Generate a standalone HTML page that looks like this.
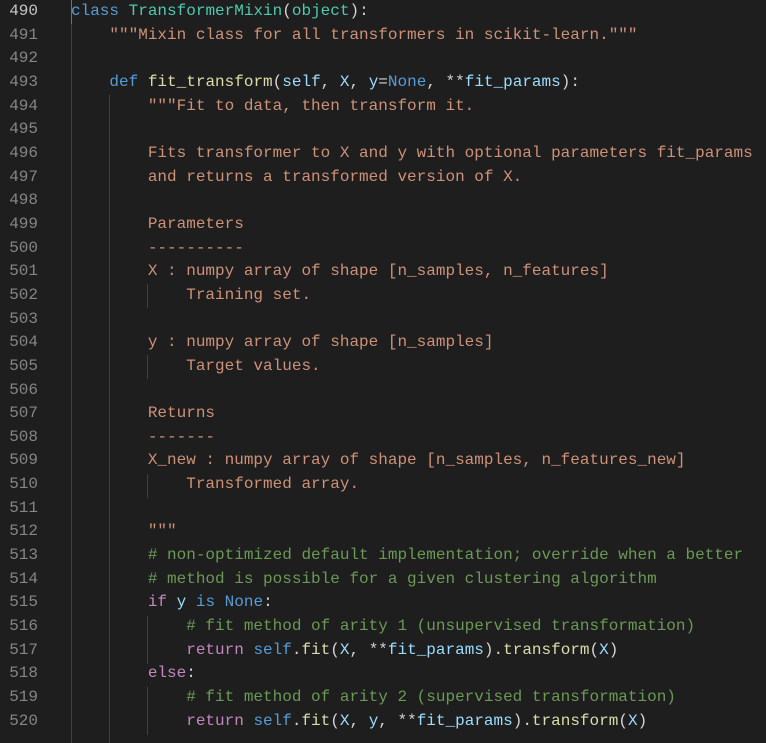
<!DOCTYPE html>
<html><head><meta charset="utf-8"><style>
html,body{margin:0;padding:0;background:#1e1e1e;width:766px;height:743px;overflow:hidden}
.ln{position:absolute;left:0;width:38px;text-align:right;color:#858585;font:16px "Liberation Mono",monospace;}
.code{position:absolute;left:71px;top:0;font:16px "Liberation Mono",monospace;color:#d4d4d4;}
.r{height:23.67px;line-height:23.67px;white-space:pre}
.g{position:absolute;width:1px;background:#404040}
.k{color:#569cd6}.c{color:#4ec9b0}.s{color:#ce9178}.m{color:#6a9955}.f{color:#dcdcaa}.p{color:#9cdcfe}.q{color:#c586c0}
</style></head><body>
<div class="g" style="left:71px;top:0;height:24px;background:#707070"></div>
<div class="g" style="left:71px;top:24px;height:719px"></div>
<div class="g" style="left:109px;top:95px;height:648px"></div>
<div class="g" style="left:147px;top:284px;height:24px"></div>
<div class="g" style="left:147px;top:355px;height:24px"></div>
<div class="g" style="left:147px;top:474px;height:24px"></div>
<div class="g" style="left:147px;top:616px;height:48px"></div>
<div class="g" style="left:147px;top:687px;height:48px"></div>
<div class="code"><div class="r"><span class="k">class</span> <span class="c">TransformerMixin</span>(<span class="c">object</span>):</div><div class="r">    <span class="s">"""Mixin class for all transformers in scikit-learn."""</span></div><div class="r"> </div><div class="r">    <span class="k">def</span> <span class="f">fit_transform</span>(<span class="p">self</span>, <span class="p">X</span>, <span class="p">y</span>=<span class="k">None</span>, **<span class="p">fit_params</span>):</div><div class="r s">        """Fit to data, then transform it.</div><div class="r"> </div><div class="r s">        Fits transformer to X and y with optional parameters fit_params</div><div class="r s">        and returns a transformed version of X.</div><div class="r"> </div><div class="r s">        Parameters</div><div class="r s">        ----------</div><div class="r s">        X : numpy array of shape [n_samples, n_features]</div><div class="r s">            Training set.</div><div class="r"> </div><div class="r s">        y : numpy array of shape [n_samples]</div><div class="r s">            Target values.</div><div class="r"> </div><div class="r s">        Returns</div><div class="r s">        -------</div><div class="r s">        X_new : numpy array of shape [n_samples, n_features_new]</div><div class="r s">            Transformed array.</div><div class="r"> </div><div class="r s">        """</div><div class="r m">        # non-optimized default implementation; override when a better</div><div class="r m">        # method is possible for a given clustering algorithm</div><div class="r">        <span class="q">if</span> <span class="p">y</span> <span class="k">is</span> <span class="k">None</span>:</div><div class="r m">            # fit method of arity 1 (unsupervised transformation)</div><div class="r">            <span class="q">return</span> <span class="k">self</span>.<span class="f">fit</span>(<span class="p">X</span>, **<span class="p">fit_params</span>).<span class="f">transform</span>(<span class="p">X</span>)</div><div class="r">        <span class="q">else</span>:</div><div class="r m">            # fit method of arity 2 (supervised transformation)</div><div class="r">            <span class="q">return</span> <span class="k">self</span>.<span class="f">fit</span>(<span class="p">X</span>, <span class="p">y</span>, **<span class="p">fit_params</span>).<span class="f">transform</span>(<span class="p">X</span>)</div></div>
<div class="ln" style="top:0"><div class="r" style="color:#c6c6c6">490</div><div class="r">491</div><div class="r">492</div><div class="r">493</div><div class="r">494</div><div class="r">495</div><div class="r">496</div><div class="r">497</div><div class="r">498</div><div class="r">499</div><div class="r">500</div><div class="r">501</div><div class="r">502</div><div class="r">503</div><div class="r">504</div><div class="r">505</div><div class="r">506</div><div class="r">507</div><div class="r">508</div><div class="r">509</div><div class="r">510</div><div class="r">511</div><div class="r">512</div><div class="r">513</div><div class="r">514</div><div class="r">515</div><div class="r">516</div><div class="r">517</div><div class="r">518</div><div class="r">519</div><div class="r">520</div></div>
</body></html>
